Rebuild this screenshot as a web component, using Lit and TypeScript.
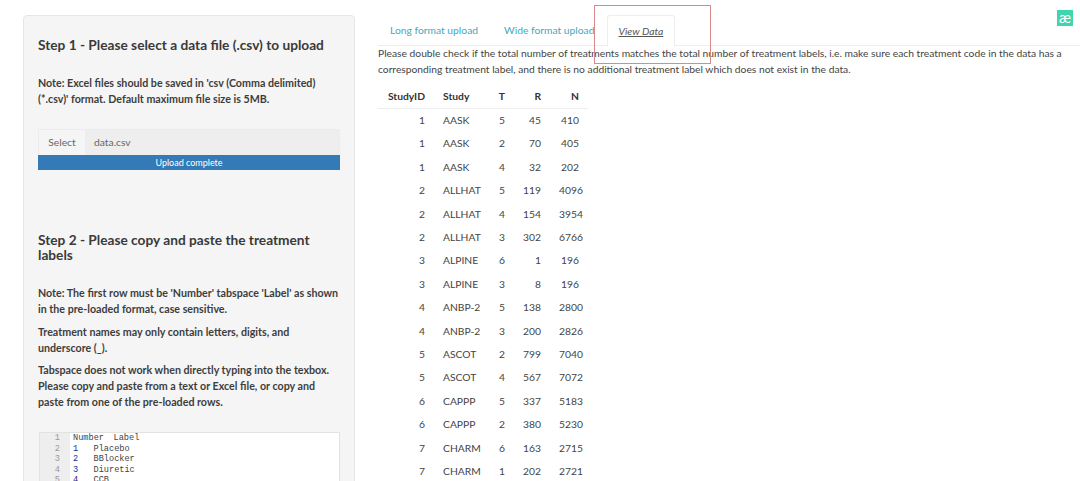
import { LitElement, html, css } from "lit";
import { customElement } from "lit/decorators.js";

const rows: [number, string, number, number, number][] = [
  [1, "AASK", 5, 45, 410],
  [1, "AASK", 2, 70, 405],
  [1, "AASK", 4, 32, 202],
  [2, "ALLHAT", 5, 119, 4096],
  [2, "ALLHAT", 4, 154, 3954],
  [2, "ALLHAT", 3, 302, 6766],
  [3, "ALPINE", 6, 1, 196],
  [3, "ALPINE", 3, 8, 196],
  [4, "ANBP-2", 5, 138, 2800],
  [4, "ANBP-2", 3, 200, 2826],
  [5, "ASCOT", 2, 799, 7040],
  [5, "ASCOT", 4, 567, 7072],
  [6, "CAPPP", 5, 337, 5183],
  [6, "CAPPP", 2, 380, 5230],
  [7, "CHARM", 6, 163, 2715],
  [7, "CHARM", 1, 202, 2721],
];

const code: [string, string, string][] = [
  ["1", "Number", "Label"],
  ["2", "1", "Placebo"],
  ["3", "2", "BBlocker"],
  ["4", "3", "Diuretic"],
  ["5", "4", "CCB"],
];

@customElement("app-root")
export class AppRoot extends LitElement {
  static styles = css`
    :host {
      display: block;
      width: 1080px;
      height: 481px;
      overflow: hidden;
      background: #fff;
      font-family: Lato, "Noto Sans", sans-serif;
      color: #333;
      font-size: 10.3px;
      line-height: 16px;
    }
    .page {
      display: flex;
      align-items: flex-start;
      height: 481px;
      overflow: hidden;
      position: relative;
    }
    .side {
      flex: none;
      box-sizing: border-box;
      width: 332px;
      height: 520px;
      margin: 15px 0 0 23px;
      padding: 21px 14px 0;
      background: #f5f5f5;
      border: 1px solid #e6e6e6;
      border-radius: 4px;
    }
    h3 {
      margin: 0;
      font-size: 13.7px;
      line-height: 15px;
      font-weight: 700;
      color: #3a3a3a;
    }
    .note {
      margin: 0 0 6px;
      font-size: 10.7px;
      line-height: 16px;
      font-weight: 700;
      color: #3d3d3d;
    }
    .n1 { margin-top: 23px; }
    .file {
      margin-top: 22px;
      display: flex;
      height: 26px;
      border: 1px solid #ececec;
      border-bottom: 0;
      box-sizing: border-box;
      width: 302px;
      color: #666;
      font-size: 10.3px;
      line-height: 25px;
    }
    .sel {
      width: 46px;
      text-align: center;
      background: #f5f5f5;
    }
    .fname {
      flex: 1;
      padding-left: 9px;
      background: #eee;
    }
    .bar {
      width: 302px;
      height: 15px;
      background: #337ab7;
      color: #fff;
      text-align: center;
      font-size: 9px;
      line-height: 15px;
    }
    .h2 { margin-top: 62px; line-height: 15px; }
    .n2 { margin: 23px 0 7px; }
    .editor {
      margin-top: 22px;
      margin-left: 1px;
      width: 301px;
      height: 80px;
      box-sizing: border-box;
      background: #fff;
      border: 1px solid #e2e2e2;
      display: flex;
      font-family: "Liberation Mono", monospace;
      font-size: 8.6px;
      line-height: 10.6px;
    }
    .gutter {
      width: 30px;
      flex: none;
      background: #eee;
      color: #999;
      text-align: right;
      padding: 0 10px 0 0;
      box-sizing: border-box;
    }
    .code { padding: 0 0 0 3px; color: #444; }
    .cl { display: flex; white-space: pre; }
    .cn { width: 20.5px; color: #2a2a88; }
    .cn.head { width: 40.5px; color: #444; }
    .main {
      flex: none;
      width: 702px;
      margin-left: 23px;
    }
    .tabs {
      display: flex;
      height: 30px;
      margin-top: 15px;
      border-bottom: 1px solid #eee;
      font-size: 10.3px;
      line-height: 31px;
    }
    .tab {
      padding: 0 12px;
      margin-right: 2px;
      color: #46a8bc;
      white-space: nowrap;
    }
    .tab.active {
      color: #555;
      font-style: italic;
      text-decoration: underline;
      background: #fff;
      border: 1px solid #eee;
      border-bottom: 1px solid #fff;
      border-radius: 3px 3px 0 0;
      margin-left: -2px;
      padding: 0 11px;
      height: 30px;
      line-height: 31px;
    }
    .intro {
      margin: -1px 0 0;
      font-size: 10.27px;
      line-height: 16px;
      color: #444;
    }
    table {
      border-collapse: collapse;
      margin-top: 8px;
      font-size: 10.3px;
      color: #444;
      table-layout: fixed;
      width: 210px;
    }
    th, td {
      padding: 0 9px;
      height: 23.4px;
      box-sizing: border-box;
      text-align: right;
      font-weight: 400;
      white-space: nowrap;
    }
    th { font-weight: 700; color: #333; border-bottom: 1px solid #eee; }
    .l { text-align: left; }
    .c1 { width: 56px; }
    .c2 { width: 52px; }
    .c3 { width: 28px; }
    .c4 { width: 36px; }
    .c5 { width: 38px; }
    .badge {
      position: absolute;
      left: 1057px;
      top: 10px;
      width: 16px;
      height: 16px;
      background: #3fd6ae;
      color: #fff;
      font-size: 15px;
      line-height: 15px;
      text-align: center;
    }
    .redbox {
      position: absolute;
      left: 594px;
      top: 5px;
      width: 115px;
      height: 57px;
      border: 1px solid #d98a8a;
    }
  `;

  render() {
    return html`<div class="page">
      <aside class="side">
        <h3>Step 1 - Please select a data file (.csv) to upload</h3>
        <p class="note n1">Note: Excel files should be saved in 'csv (Comma delimited) (*.csv)' format. Default maximum file size is 5MB.</p>
        <div class="file"><span class="sel">Select</span><span class="fname">data.csv</span></div>
        <div class="bar">Upload complete</div>
        <h3 class="h2">Step 2 - Please copy and paste the treatment labels</h3>
        <p class="note n2">Note: The first row must be 'Number' tabspace 'Label' as shown in the pre-loaded format, case sensitive.</p>
        <p class="note">Treatment names may only contain letters, digits, and underscore (_).</p>
        <p class="note">Tabspace does not work when directly typing into the texbox. Please copy and paste from a text or Excel file, or copy and paste from one of the pre-loaded rows.</p>
        <div class="editor">
          <div class="gutter">${code.map((c) => html`<div>${c[0]}</div>`)}</div>
          <div class="code">
            ${code.map(
              (c, i) => html`<div class="cl"><span class="cn ${i === 0 ? "head" : ""}">${c[1]}</span><span>${c[2]}</span></div>`
            )}
          </div>
        </div>
      </aside>
      <main class="main">
        <div class="tabs">
          <span class="tab">Long format upload</span>
          <span class="tab">Wide format upload</span>
          <span class="tab active">View Data</span>
        </div>
        <p class="intro">Please double check if the total number of treatments matches the total number of treatment labels, i.e. make sure each treatment code in the data has a corresponding treatment label, and there is no additional treatment label which does not exist in the data.</p>
        <table>
          <colgroup><col class="c1" /><col class="c2" /><col class="c3" /><col class="c4" /><col class="c5" /></colgroup>
          <thead><tr><th>StudyID</th><th class="l">Study</th><th>T</th><th>R</th><th>N</th></tr></thead>
          <tbody>
            ${rows.map(
              (r) => html`<tr><td>${r[0]}</td><td class="l">${r[1]}</td><td>${r[2]}</td><td>${r[3]}</td><td>${r[4]}</td></tr>`
            )}
          </tbody>
        </table>
      </main>
      <div class="badge">æ</div>
      <div class="redbox"></div>
    </div>`;
  }
}
